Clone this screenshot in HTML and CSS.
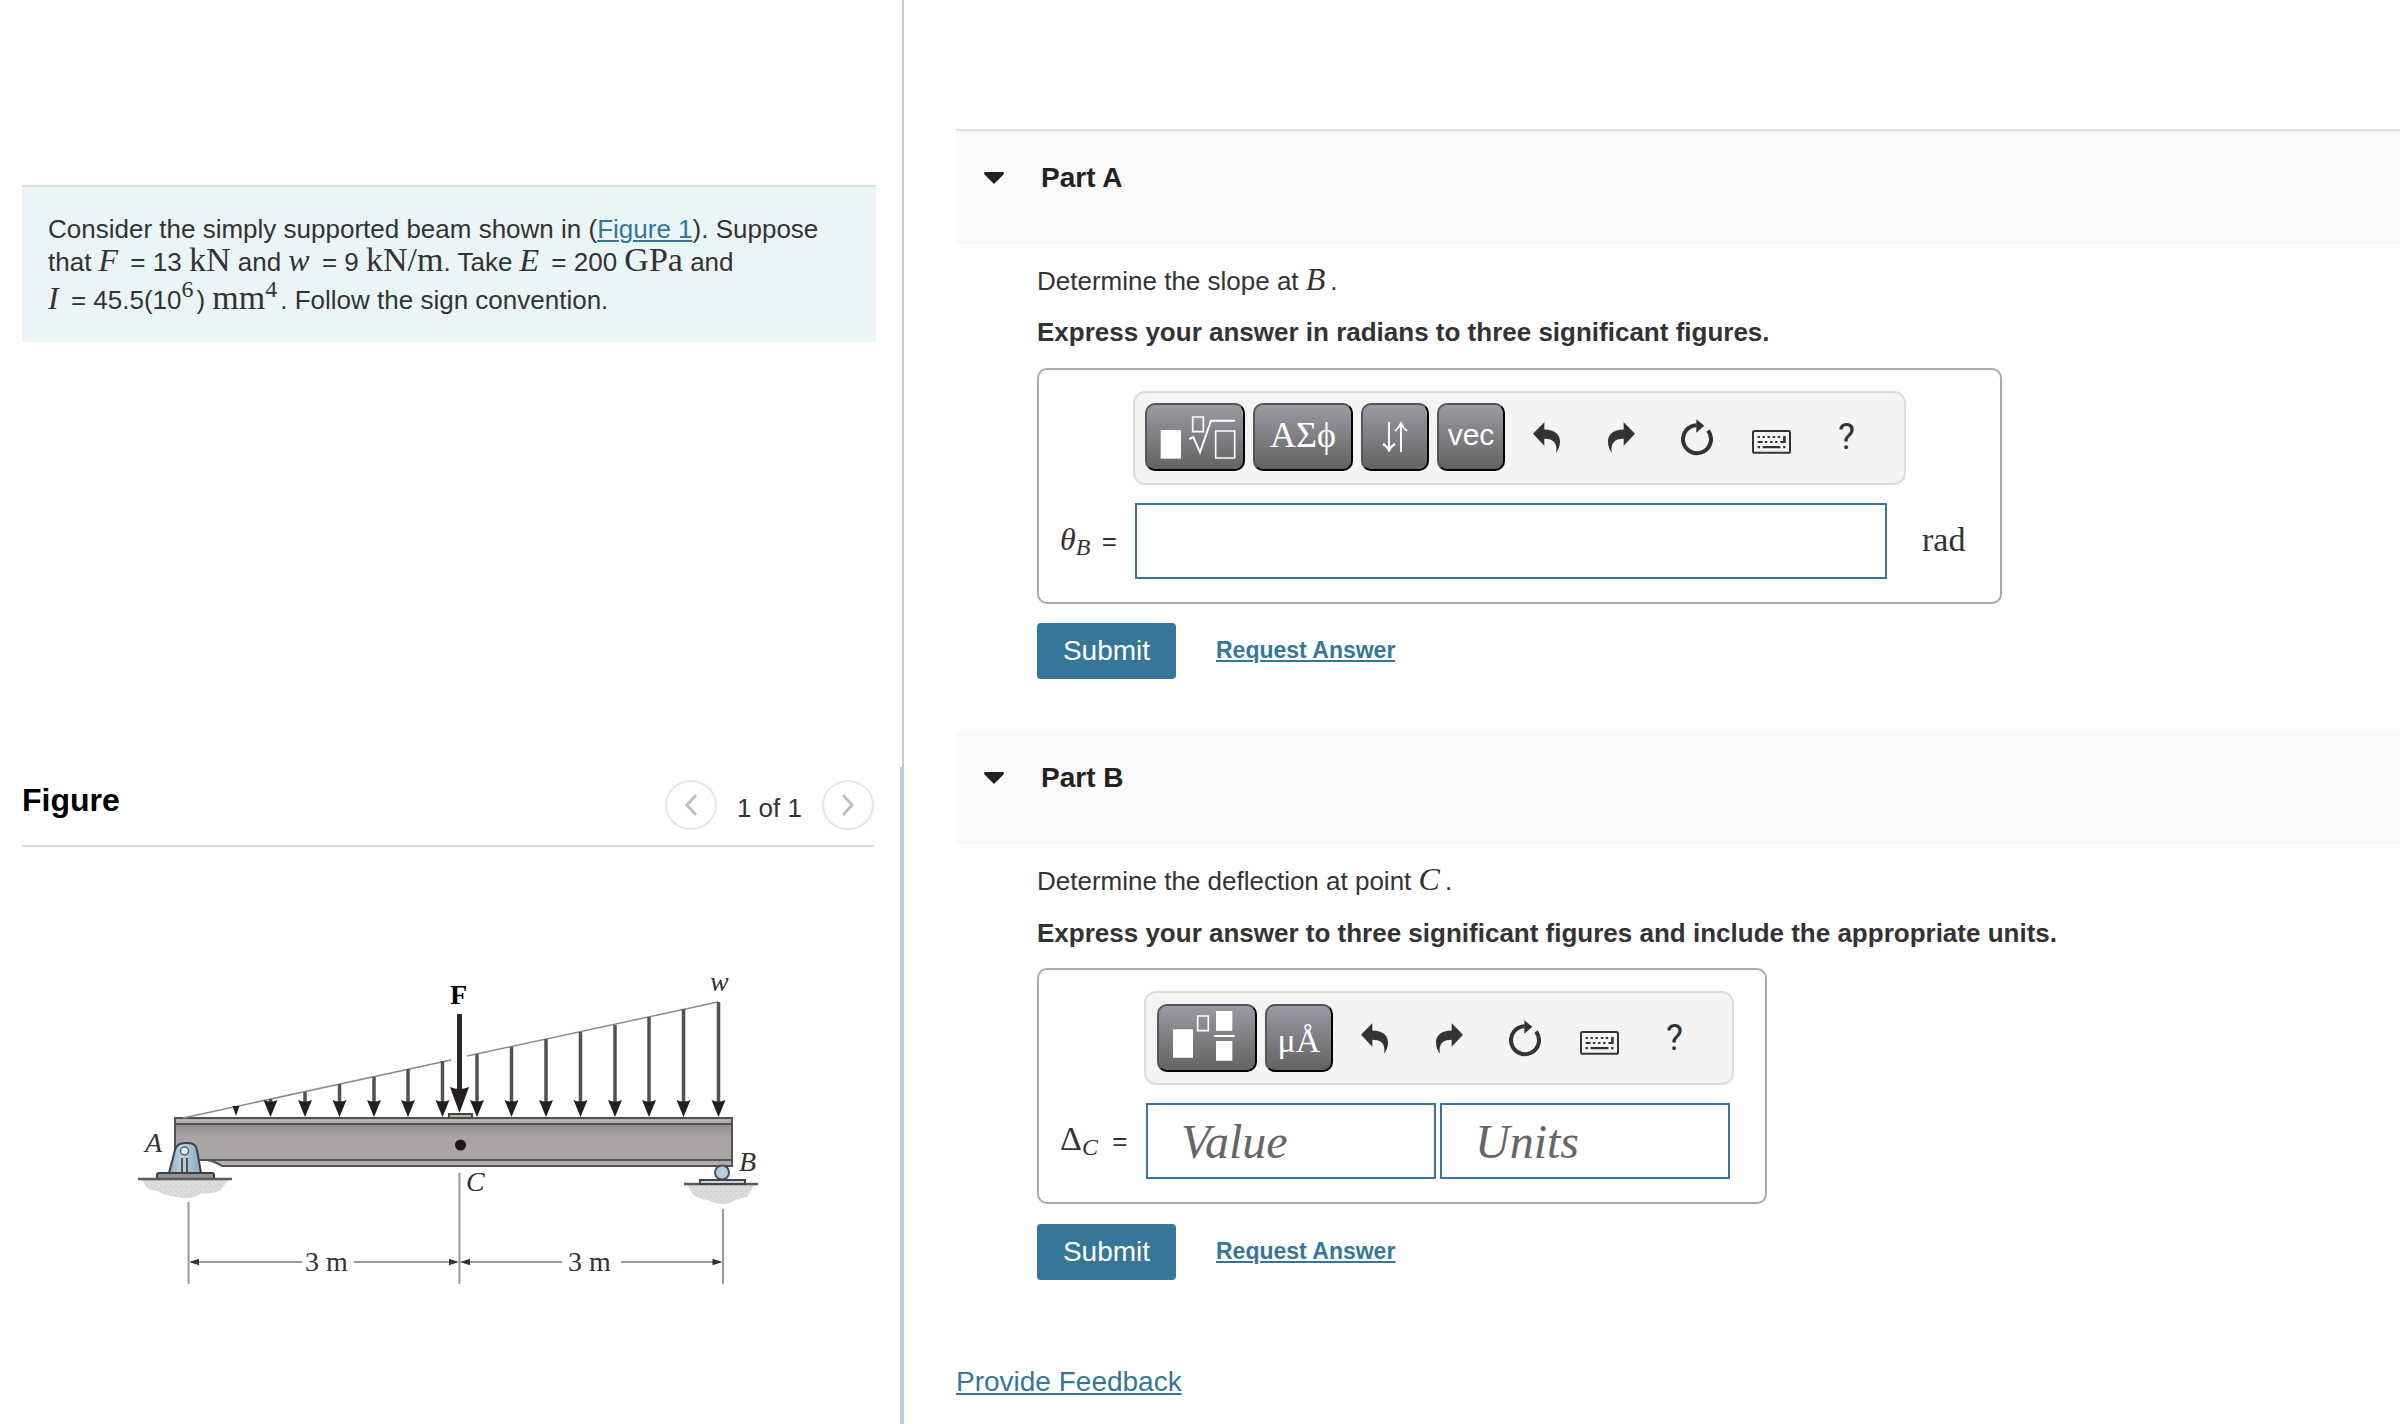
FILE: index.html
```html
<!DOCTYPE html>
<html lang="en">
<head>
<meta charset="utf-8">
<meta name="viewport" content="width=device-width, initial-scale=1">
<title>Simply supported beam</title>
<link rel="stylesheet" href="styles.css">
</head>
<body>
<svg class="sprite" aria-hidden="true">
  <symbol id="i-undo" viewBox="0 0 81 92"><path fill="currentColor" d="M0 35 34 0V22C66 22 81 38 81 58C81 72 76 84 69 92C72 78 70 66 62 58C56 52 46 50 34 50V71Z"/></symbol>
  <symbol id="i-redo" viewBox="0 0 81 92"><path fill="currentColor" d="M81 35 47 0V22C15 22 0 38 0 58C0 72 5 84 12 92C9 78 11 66 19 58C25 52 35 50 47 50V71Z"/></symbol>
  <symbol id="i-reset" viewBox="0 0 96 110"><path fill="none" stroke="currentColor" stroke-width="12" d="M81 34A42 42 0 1 1 47 18"/><path fill="currentColor" d="M46 0 70 20 46 41Z"/></symbol>
  <symbol id="i-keys" viewBox="0 0 118 102"><g transform="translate(0 30)"><rect x="3" y="3" width="112" height="66" rx="5" fill="none" stroke="currentColor" stroke-width="6"/><path fill="currentColor" d="M17 18h7v6h-7zM32 18h7v6h-7zM47 18h7v6h-7zM63 18h7v6h-7zM78 18h7v6h-7zM94 18h8v21h-16v-6h8zM17 33h15v6h-15zM39 33h7v6h-7zM55 33h7v6h-7zM70 33h7v6h-7zM17 48h7v7h-7zM32 48h54v7h-54zM94 48h7v7h-7z"/></g></symbol>
</svg>
<div class="layout">
  <aside class="side">
    <section class="pane pane-problem">
      <div class="problem">
        <p>Consider the simply supported beam shown in (<a href="#figure">Figure 1</a>). Suppose that <span class="nowrap"><i class="math">F</i> = 13 <span class="math">kN</span></span> and <span class="nowrap"><i class="math">w</i> = 9 <span class="math">kN/m</span></span>. Take <span class="nowrap"><i class="math">E</i> = 200 <span class="math">GPa</span></span> and <span class="formula"><i class="math">I</i> = 45.5(10<sup class="math">6</sup>) <span class="math">mm</span><sup class="math">4</sup></span>. Follow the sign convention.</p>
      </div>
    </section>
    <section class="pane pane-figure" id="figure">
      <header class="figure-head">
        <h2>Figure</h2>
        <nav class="pager">
          <button type="button" aria-label="Previous figure"><svg width="14" height="22" viewBox="0 0 14 22"><path d="M12 1 3 11 12 21"/></svg></button>
          <span>1 of 1</span>
          <button type="button" aria-label="Next figure"><svg width="14" height="22" viewBox="0 0 14 22"><path d="M2 1 11 11 2 21"/></svg></button>
        </nav>
      </header>
      <svg class="diagram" viewBox="130 950 640 340" role="img" aria-label="Beam diagram">
        <defs>
          <linearGradient id="web" x1="0" y1="0" x2="0" y2="1"><stop offset="0" stop-color="#8f8b8a"/><stop offset=".35" stop-color="#a8a4a3"/><stop offset="1" stop-color="#aaa6a5"/></linearGradient>
          <linearGradient id="steel" x1="0" y1="0" x2="1" y2="0"><stop offset="0" stop-color="#8fabc0"/><stop offset=".4" stop-color="#bad3e4"/><stop offset="1" stop-color="#8aa7bb"/></linearGradient>
          <pattern id="grain" width="5" height="5" patternUnits="userSpaceOnUse"><rect width="5" height="5" fill="#dcdcdc"/><circle cx="1" cy="1" r=".8" fill="#c6c6c6"/><circle cx="3.5" cy="3.3" r=".8" fill="#cecece"/></pattern>
          <path id="head" d="M-7 -17Q0 -14 7 -17L0 0Z" fill="#231f20"/>
          <path id="dim" d="M0 0 10 -3.300V3.300Z" fill="#333"/>
        </defs>
        <path d="M142 1180H228L221 1190Q210 1195 202 1193 190 1201 178 1197 164 1196 158 1191 147 1192 142 1180Z" fill="url(#grain)"/>
        <path d="M687 1185H755L747 1197Q735 1199 730 1203 718 1206 708 1200 697 1199 693 1194Z" fill="url(#grain)"/>
        <path d="M175 1118H732V1166H222Q214 1161 207 1160H175Z" fill="#b1adac"/>
        <rect x="175" y="1124" width="557" height="36" fill="url(#web)"/>
        <g fill="none" stroke="#555051" stroke-width="2"><path d="M175 1160V1118H732V1166H222Q214 1161 207 1160"/><path d="M175 1124H732M199 1160H732"/></g>
        <path d="M183 1118 451 1060M467 1056 718 1002" stroke="#8b8b8b" stroke-width="1.500"/>
        <path d="M270.500 1099V1106M305 1092V1106M339.500 1084V1106M374 1077V1106M408 1069V1106M442.500 1061V1106M477 1054V1106M511.500 1047V1106M546 1039V1106M580.500 1032V1106M615 1025V1106M649 1017V1106M683.500 1009V1106M718.500 1002V1106" stroke="#555152" stroke-width="3.500"/>
        <path d="M232.500 1106H239.500L236 1116Z" fill="#231f20"/>
        <use href="#head" x="270.500" y="1117"/><use href="#head" x="305" y="1117"/><use href="#head" x="339.500" y="1117"/><use href="#head" x="374" y="1117"/><use href="#head" x="408" y="1117"/><use href="#head" x="442.500" y="1117"/><use href="#head" x="477" y="1117"/><use href="#head" x="511.500" y="1117"/><use href="#head" x="546" y="1117"/><use href="#head" x="580.500" y="1117"/><use href="#head" x="615" y="1117"/><use href="#head" x="649" y="1117"/><use href="#head" x="683.500" y="1117"/><use href="#head" x="718.500" y="1117"/>
        <path d="M459.500 1014V1092" stroke="#2e2a2b" stroke-width="5"/>
        <path d="M450 1087Q459.500 1091 469 1087L459.500 1113Z" fill="#231f20"/>
        <rect x="449" y="1114" width="23" height="4" fill="#bdb8a0" stroke="#4a4640" stroke-width="2"/>
        <circle cx="460.500" cy="1145" r="5.500" fill="#1a1718"/>
        <rect x="157" y="1173" width="57" height="6" rx="2" fill="#8e9499" stroke="#3c3c3c" stroke-width="2"/>
        <path d="M169 1173 175 1150Q177 1143 185 1143H188Q196 1143 197 1150L201 1173Z" fill="url(#steel)" stroke="#3d4145" stroke-width="2"/>
        <circle cx="184.500" cy="1151" r="4" fill="#e6eef4" stroke="#55606a" stroke-width="1.500"/>
        <path d="M182 1158V1173M187 1158V1173" stroke="#4d5358" stroke-width="2"/>
        <path d="M138 1179H232M684 1184H758" stroke="#5a5a5a" stroke-width="2.500"/>
        <circle cx="722" cy="1172.500" r="7" fill="#b4cfe0" stroke="#45525c" stroke-width="2"/>
        <rect x="700" y="1180" width="45" height="4" fill="#c5d3dd" stroke="#444" stroke-width="2"/>
        <path d="M188.500 1202V1284M459.500 1173V1284M723 1209V1284" stroke="#999" stroke-width="2"/>
        <path d="M197 1262H302M354 1262H450M469 1262H562M621 1262H713" stroke="#777" stroke-width="1.500"/>
        <use href="#dim" x="189" y="1262"/><use href="#dim" transform="translate(459 1262) scale(-1 1)"/><use href="#dim" x="460" y="1262"/><use href="#dim" transform="translate(722.500 1262) scale(-1 1)"/>
        <text class="force" x="450" y="1004">F</text>
        <g class="letters"><text x="145" y="1152">A</text><text x="739" y="1171">B</text><text x="466" y="1191">C</text><text x="710" y="991">w</text></g>
        <text x="305" y="1271">3 m</text><text x="568" y="1271">3 m</text>
      </svg>
    </section>
  </aside>
  <main class="content">
    <section class="part part-a">
      <header class="part-head"><svg width="20" height="12" viewBox="0 0 20 12"><path d="M1 0H19Q21 1 19 3L10 12 1 3Q-1 1 1 0Z" fill="#222"/></svg><h2>Part A</h2></header>
      <div class="part-body">
        <p>Determine the slope at <i class="math">B</i>.</p>
        <p><b>Express your answer in radians to three significant figures.</b></p>
        <div class="card">
          <div class="toolbar">
            <button type="button" class="key wide" aria-label="Templates"><svg class="templates-a" width="76" height="43" viewBox="420 165 228 129"><path fill="#fff" d="M422 207H483V293H422Z"/><path fill="none" stroke="#fff" stroke-width="5" d="M518 168H550V212H518ZM587 210H644V291H587Z"/><path fill="none" stroke="#fff" stroke-width="6" d="M508 234 520 228 540 274 573 179H645"/></svg></button>
            <button type="button" class="key wide greek">ΑΣϕ</button>
            <button type="button" class="key" aria-label="Subscript and superscript arrows"><svg width="26" height="30" viewBox="0 0 26 30"><path d="M7 0V28M1 22Q5 24 7 29 9 24 13 22M19 30V2M13 9Q17 6 19 1 21 6 25 9" fill="none" stroke="#fff" stroke-width="2"/></svg></button>
            <button type="button" class="key vec">vec</button>
            <div class="tools">
              <button type="button" aria-label="Undo"><svg width="27" height="31"><use href="#i-undo"/></svg></button>
              <button type="button" aria-label="Redo"><svg width="27" height="31"><use href="#i-redo"/></svg></button>
              <button type="button" aria-label="Reset"><svg width="32" height="37"><use href="#i-reset"/></svg></button>
              <button type="button" aria-label="Keyboard shortcuts"><svg width="39" height="34"><use href="#i-keys"/></svg></button>
              <button type="button" class="help">?</button>
            </div>
          </div>
          <label for="theta"><i class="math">θ<sub>B</sub></i> <span>=</span></label>
          <input id="theta" type="text">
          <span class="math unit">rad</span>
        </div>
        <div class="actions"><button type="submit" class="submit">Submit</button><a href="#answer-a">Request Answer</a></div>
      </div>
    </section>
    <section class="part part-b">
      <header class="part-head"><svg width="20" height="12" viewBox="0 0 20 12"><path d="M1 0H19Q21 1 19 3L10 12 1 3Q-1 1 1 0Z" fill="#222"/></svg><h2>Part B</h2></header>
      <div class="part-body">
        <p>Determine the deflection at point <i class="math">C</i>.</p>
        <p><b>Express your answer to three significant figures and include the appropriate units.</b></p>
        <div class="card">
          <div class="toolbar">
            <button type="button" class="key wide" aria-label="Templates"><svg class="templates-b" width="62" height="50" viewBox="459 156 186 150"><path fill="#fff" d="M459 211H519V296H459ZM588 156H637V215H588ZM582 228H644V234H582ZM588 246H637V305H588Z"/><path fill="none" stroke="#fff" stroke-width="5" d="M533 171H565V215H533Z"/></svg></button>
            <button type="button" class="key symbols">μÅ</button>
            <div class="tools">
              <button type="button" aria-label="Undo"><svg width="27" height="31"><use href="#i-undo"/></svg></button>
              <button type="button" aria-label="Redo"><svg width="27" height="31"><use href="#i-redo"/></svg></button>
              <button type="button" aria-label="Reset"><svg width="32" height="37"><use href="#i-reset"/></svg></button>
              <button type="button" aria-label="Keyboard shortcuts"><svg width="39" height="34"><use href="#i-keys"/></svg></button>
              <button type="button" class="help">?</button>
            </div>
          </div>
          <label for="value"><span class="math">Δ<sub><i>C</i></sub></span> <span>=</span></label>
          <div class="pair"><input id="value" type="text" placeholder="Value"><input type="text" placeholder="Units" aria-label="Units"></div>
        </div>
        <div class="actions"><button type="submit" class="submit">Submit</button><a href="#answer-b">Request Answer</a></div>
      </div>
    </section>
    <a class="feedback" href="#feedback">Provide Feedback</a>
  </main>
</div>
</body>
</html>
```
FILE: styles.css
```css
* { box-sizing: border-box; }
body { margin: 0; background: #fff; color: #333; font: 26px/32px "Liberation Sans", Arial, sans-serif; }
h2, p { margin: 0; }
a { color: #367799; text-underline-offset: 2px; text-decoration-thickness: 2px; }
button, input { font: inherit; color: inherit; margin: 0; padding: 0; }
button { cursor: pointer; }
svg { display: block; }
.sprite { position: absolute; width: 0; height: 0; }
.math { font-family: "Liberation Serif", serif; font-size: 34px; line-height: 1px; }
i.math { font-size: 32px; margin-right: 5px; }
.nowrap { white-space: nowrap; }

.layout { display: grid; grid-template-columns: minmax(0, 113fr) minmax(0, 187fr); min-height: 100vh; }

/* Left column */
.side { display: grid; grid-template-rows: minmax(767px, 7fr) minmax(600px, 6fr); }
.pane { border-right: 2px solid #bfcbdb; }
.pane-problem { padding: 185px 26px 0 22px; }
.problem { background: #eaf5f8; border-top: 2px solid #dcdfdf; padding: 26px 26px 25px; line-height: 33px; }
.formula { display: inline-block; padding-top: 5px; white-space: nowrap; }
.formula sup { font-size: 24px; margin-right: 3px; vertical-align: 12px; }
.pane-figure { border-right-width: 4px; padding: 13px 26px 0 22px; }
.figure-head { display: flex; align-items: center; justify-content: space-between; border-bottom: 2px solid #dcdcdc; padding-bottom: 15px; }
.figure-head h2 { color: #000; font-size: 32px; line-height: 40px; padding-bottom: 10px; }
.pager { display: flex; align-items: center; gap: 20px; }
.pager span { padding-top: 6px; }
.pager button { display: grid; place-items: center; width: 52px; height: 50px; background: #fff; border: 2px solid #e6e6e6; border-radius: 50%; }
.pager path { fill: none; stroke: #c0c0c0; stroke-width: 3; }
.diagram { width: 640px; max-width: 100%; margin: 103px 0 0 108px; font: 28px "Liberation Serif", serif; fill: #333; }
.letters { font-style: italic; }
.force { font-weight: bold; fill: #000; }

/* Right column */
.content { padding: 129px 0 24px 52px; }
.part-a { border-top: 2px solid #dedede; margin-bottom: 52px; }
.part-head { display: flex; align-items: center; gap: 37px; background: #f9f9f9; padding: 31px 28px 50px; }
.part-head h2 { color: #222; font-size: 28px; line-height: 32px; }
.part-body { padding: 21px 16px 0 81px; }
.part-body p { margin-bottom: 19px; }
.card { display: inline-grid; grid-template-columns: 73px auto auto; align-items: center; row-gap: 18px; max-width: 100%; margin-top: 1px; padding: 21px 33px 23px 21px; border: 2px solid #aaa; border-radius: 10px; vertical-align: top; }
.toolbar { grid-column: 2 / -1; justify-self: start; display: flex; align-items: center; gap: 8px; height: 94px; padding: 0 20px 2px 10px; background: #f4f4f4; border: 2px solid #dcdcdc; border-radius: 12px; }
.key { display: grid; place-items: center; width: 68px; height: 68px; color: #fff; background: linear-gradient(#9b99a3, #636363); border: 2px solid; border-color: #555 #000 #000 #555; border-radius: 10px; }
.wide { width: 100px; }
.greek { font-family: "Liberation Serif", serif; font-size: 36px; padding-bottom: 4px; }
.symbols { font-family: "Liberation Serif", serif; font-size: 34px; padding-top: 6px; }
.vec { font-size: 30px; padding-bottom: 4px; }
.templates-a { margin-left: 6px; }
.templates-b { margin: 0 6px 4px 0; }
.tools { display: flex; margin-left: -4px; }
.tools button { display: grid; place-items: center; width: 75px; height: 68px; background: none; border: 0; }
.tools .help { font: 36px Roboto, sans-serif; }
.card label { white-space: nowrap; }
.card i.math { margin: 0; }
.card sub { font-size: 24px; vertical-align: -5px; }
.card label > span:last-child { margin-left: 4px; }
.card input { width: 752px; height: 76px; margin-left: 2px; padding: 0 33px; background: #fff; border: 2px solid #367799; border-radius: 0; font: italic 48px "Liberation Serif", serif; }
.card input::placeholder { color: #666; opacity: 1; }
.card .pair { display: flex; gap: 4px; margin-left: 2px; }
.card .pair input { width: 290px; margin: 0; }
.unit { width: 45px; margin-left: 35px; line-height: 32px; padding-bottom: 2px; }
.actions { display: flex; align-items: center; gap: 40px; margin-top: 19px; }
.submit { width: 139px; height: 56px; color: #fff; background: #367799; border: 0; border-radius: 4px; font-size: 28px; }
.actions a { font-size: 23px; font-weight: bold; padding-bottom: 2px; }
.feedback { display: inline-block; margin-top: 84px; font-size: 28px; line-height: 36px; }

.part-b p:first-child { margin-bottom: 20px; }
.part-b .card { grid-template-columns: 84px auto; margin-top: 0; padding-right: 31px; }
.part-b .toolbar { padding: 0 20px 0 11px; }
.part-b .card label > span:last-child { margin-left: 7px; }
.part-b .actions { margin-top: 20px; }
```
